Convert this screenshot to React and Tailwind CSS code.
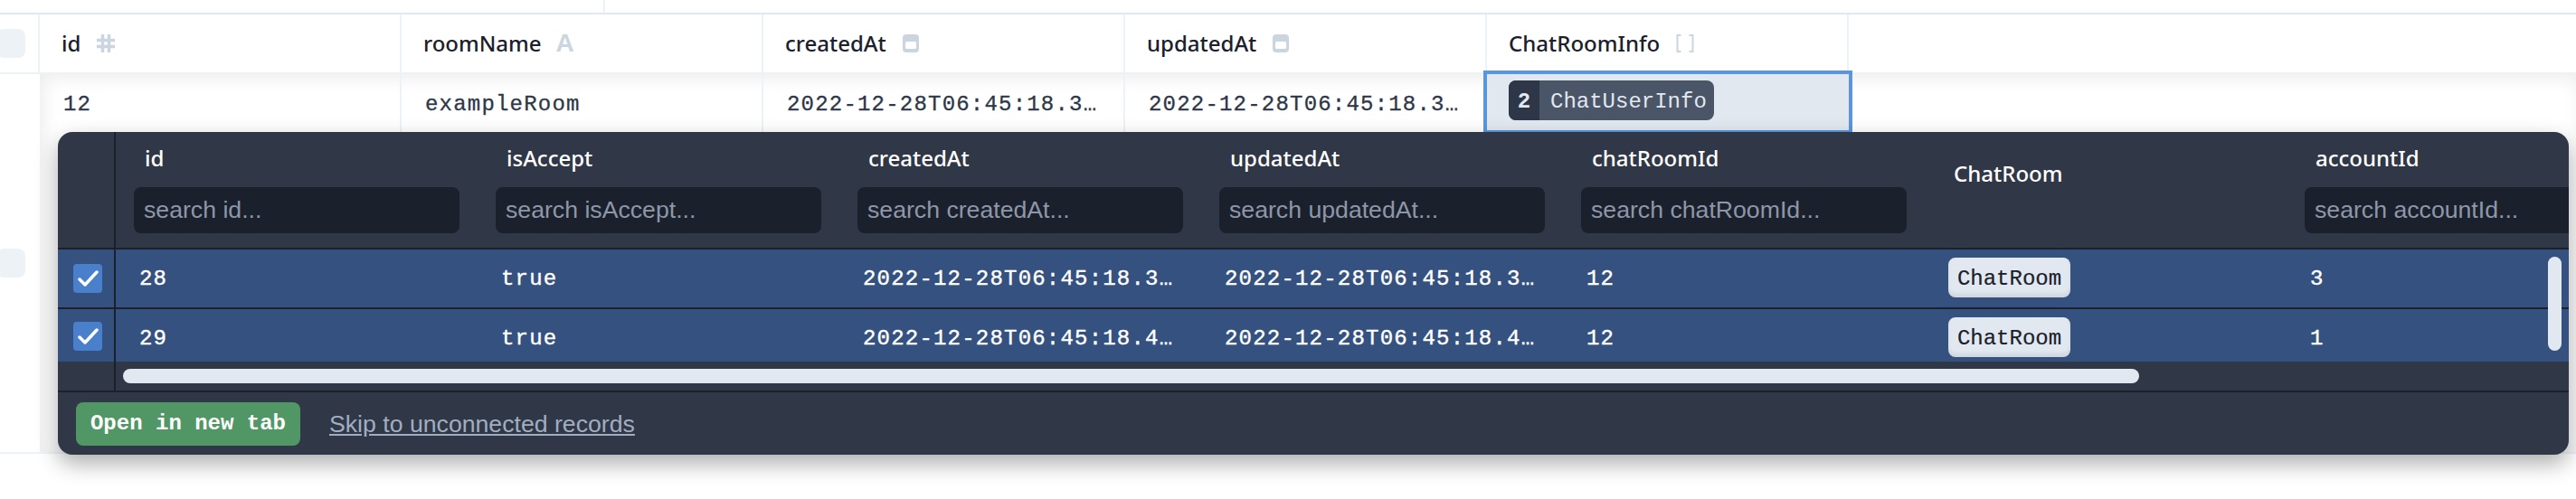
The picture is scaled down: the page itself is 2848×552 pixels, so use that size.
import React from "react";

const mono = "font-['Liberation_Mono',monospace]";
const sans = "font-['Noto_Sans',sans-serif]";
const arial = "font-['Liberation_Sans',sans-serif]";

const HashIcon = () => (
  <svg width="20" height="20" viewBox="0 0 20 20" fill="none" stroke="#cbd5e0" strokeWidth="3.500">
    <path d="M0 6.500h20M0 13.500h20M6.500 0v20M13.500 0v20" />
  </svg>
);

const DateIcon = () => (
  <svg width="18" height="20" viewBox="0 0 18 20">
    <rect width="18" height="20" rx="4" fill="#cbd5e0" />
    <rect x="3" y="8" width="12" height="8" rx="1.5" fill="#ffffff" />
  </svg>
);

const ListIcon = () => (
  <svg width="20" height="20" viewBox="0 0 20 20" fill="none" stroke="#cbd5e0" strokeWidth="2">
    <path d="M5.500 1H1.500V19H5.500M14.500 1H18.500V19H14.500" />
  </svg>
);

const Check = () => (
  <svg width="24" height="20" viewBox="0 0 24 20" fill="none" stroke="#ffffff" strokeWidth="3.500" strokeLinecap="round" strokeLinejoin="round">
    <path d="M3 11l6 6L22 3" />
  </svg>
);

const headerCols = [
  { name: "id", icon: <HashIcon /> },
  { name: "roomName", icon: <span className={`${arial} -ml-[2px] text-[28px] leading-none font-bold text-[#cbd5e0]`}>A</span> },
  { name: "createdAt", icon: <DateIcon /> },
  { name: "updatedAt", icon: <DateIcon /> },
  { name: "ChatRoomInfo", icon: <ListIcon /> },
];

const nestedCols = ["id", "isAccept", "createdAt", "updatedAt", "chatRoomId", "ChatRoom", "accountId"];

const nestedRows = [
  { id: "28", accept: "true", created: "2022-12-28T06:45:18.316Z", updated: "2022-12-28T06:45:18.316Z", room: "12", account: "3" },
  { id: "29", accept: "true", created: "2022-12-28T06:45:18.421Z", updated: "2022-12-28T06:45:18.421Z", room: "12", account: "1" },
];

const outerCells = ["12", "exampleRoom", "2022-12-28T06:45:18.316Z", "2022-12-28T06:45:18.316Z"];

const Cell = ({ children }) => (
  <div className="flex h-16 w-[400px] shrink-0 items-center pl-[26px] pr-6 pt-[2px] min-w-0">
    <span className="block truncate">{children}</span>
  </div>
);

const NestedRow = ({ row, last }) => (
  <div className={`flex w-[2744px] overflow-hidden ${last ? "h-[58px]" : "h-[66px] border-b-2 border-[#1a202c]"} bg-[#34517f] ${mono} text-[24px] tracking-[1.200px] text-white [-webkit-text-stroke:0.4px_#ffffff]`}>
    <Cell>{row.id}</Cell>
    <Cell>{row.accept}</Cell>
    <Cell>{row.created}</Cell>
    <Cell>{row.updated}</Cell>
    <Cell>{row.room}</Cell>
    <div className="flex w-[400px] shrink-0 items-start pl-[26px] pt-[9px]">
      <span className="flex h-11 w-[135px] items-center justify-center rounded-lg bg-[#e2e8f0] pt-1 text-[#1a202c] tracking-normal [-webkit-text-stroke:0.2px_#1a202c] shadow-[inset_0_-4px_4px_rgba(0,0,0,0.08)]">
        ChatRoom
      </span>
    </div>
    <Cell>{row.account}</Cell>
  </div>
);

export default function App() {
  return (
    <div className="h-[552px] w-[2848px] overflow-hidden bg-white">
      {/* top strip */}
      <div className="h-[16px] border-b-2 border-[#e2e8f0]">
        <div className="h-[14px] w-[669px] border-r-2 border-[#edf2f7]" />
      </div>

      {/* column headers */}
      <div className="flex h-[66px] border-b-2 border-[#edf2f7]">
        <div className="flex w-[44px] shrink-0 items-center border-r-2 border-[#edf2f7]">
          <div className="-ml-1 h-8 w-8 rounded-lg bg-[#edf2f7]" />
        </div>
        {headerCols.map((col) => (
          <div key={col.name} className={`flex w-[400px] items-center gap-[18px] border-r-2 border-[#edf2f7] px-6 ${sans} text-[24px] font-medium text-[#1a202c]`}>
            <span>{col.name}</span>
            {col.icon}
          </div>
        ))}
      </div>

      {/* expanded record row */}
      <div className="relative flex h-[420px] border-b-2 border-[#edf2f7]">
        <div className="flex w-[44px] shrink-0 items-center">
          <div className="-ml-1 h-8 w-8 rounded-lg bg-[#edf2f7]" />
        </div>
        <div className={`flex flex-1 items-start shadow-[inset_4px_4px_20px_rgba(0,0,0,0.08)] ${mono} text-[24px] tracking-[1.200px] text-[#2d3748] [-webkit-text-stroke:0.3px_#2d3748]`}>
          {outerCells.map((v, i) => (
            <div key={i} className="h-16 w-[400px] shrink-0 truncate border-r-2 border-[#edf2f7] pl-[26px] pr-6 pt-[22px] leading-[24px]">
              {v}
            </div>
          ))}
          <div className="relative h-16 w-[400px] shrink-0">
            <div className="absolute -left-1 -right-1 -top-1 h-[70px] border-4 border-[#5a96dc] bg-[#e2e8f0] pl-6 pt-[7px]">
              <span className="flex h-11 w-[227px] overflow-hidden rounded-lg bg-[#4a5568] tracking-normal [-webkit-text-stroke:0]">
                <span className="flex w-[34px] items-center justify-center bg-[#2d3748] pt-1 font-bold text-[#e2e8f0]">2</span>
                <span className="flex flex-1 items-center pl-3 pt-1 text-[#e2e8f0]">ChatUserInfo</span>
              </span>
            </div>
          </div>
        </div>

        {/* nested relation popover */}
        <div className="absolute left-16 top-16 h-[357px] w-[2776px] overflow-hidden rounded-2xl bg-[#303747] shadow-[0_10px_24px_rgba(0,0,0,0.32)]">
          <div className="flex">
            <div className="w-16 shrink-0 border-r-2 border-[#1a202c]">
              <div className="h-[128px]" />
              <div className="h-[2px] bg-[#1a202c]" />
              <div className="flex h-[66px] items-start justify-center border-b-2 border-[#1a202c] bg-[#34517f] pl-[4px] pt-4">
                <span className="flex h-8 w-8 items-center justify-center rounded bg-[#4a7fcb]"><Check /></span>
              </div>
              <div className="flex h-[58px] items-start justify-center bg-[#34517f] pl-[4px] pt-[14px]">
                <span className="flex h-8 w-8 items-center justify-center rounded bg-[#4a7fcb]"><Check /></span>
              </div>
              <div className="h-8" />
            </div>

            <div className="relative min-w-0 flex-1 overflow-hidden">
              <div className="flex h-[128px]">
                {nestedCols.map((name) => (
                  <div key={name} className="flex w-[400px] shrink-0 flex-col px-5">
                    <div className={`px-3 ${sans} text-[24px] font-medium leading-[32px] text-white ${name === "ChatRoom" ? "pt-[30px]" : "pt-[13px]"}`}>{name}</div>
                    {name !== "ChatRoom" && (
                      <input
                        readOnly
                        placeholder={`search ${name}...`}
                        className={`mt-[16px] h-[51px] w-[360px] shrink-0 rounded-lg bg-[#1a202c] px-[11px] ${arial} text-[26.670px] text-white outline-none placeholder:text-[#8e97a8]`}
                      />
                    )}
                  </div>
                ))}
              </div>
              <div className="h-[2px] bg-[#1a202c]" />
              {nestedRows.map((row, i) => (
                <NestedRow key={row.id} row={row} last={i === nestedRows.length - 1} />
              ))}
              <div className="flex h-8 items-center pl-2">
                <div className="h-4 w-[2229px] rounded-full bg-[#e2e8f0]" />
              </div>
              <div className="absolute left-[2689px] top-[138px] h-[104px] w-[15px] rounded-full bg-[#e2e8f0]" />
            </div>
          </div>

          <div className="flex h-[71px] items-start gap-8 border-t-2 border-[#1a202c] pl-5 pt-[11px]">
            <button className={`h-12 w-[248px] rounded-lg bg-[#519766] ${mono} text-[24px] font-bold text-white`}>Open in new tab</button>
            <a className={`${arial} mt-1 text-[26.670px] leading-[40px] text-[#a0aec0] underline`}>Skip to unconnected records</a>
          </div>
        </div>
      </div>
    </div>
  );
}
